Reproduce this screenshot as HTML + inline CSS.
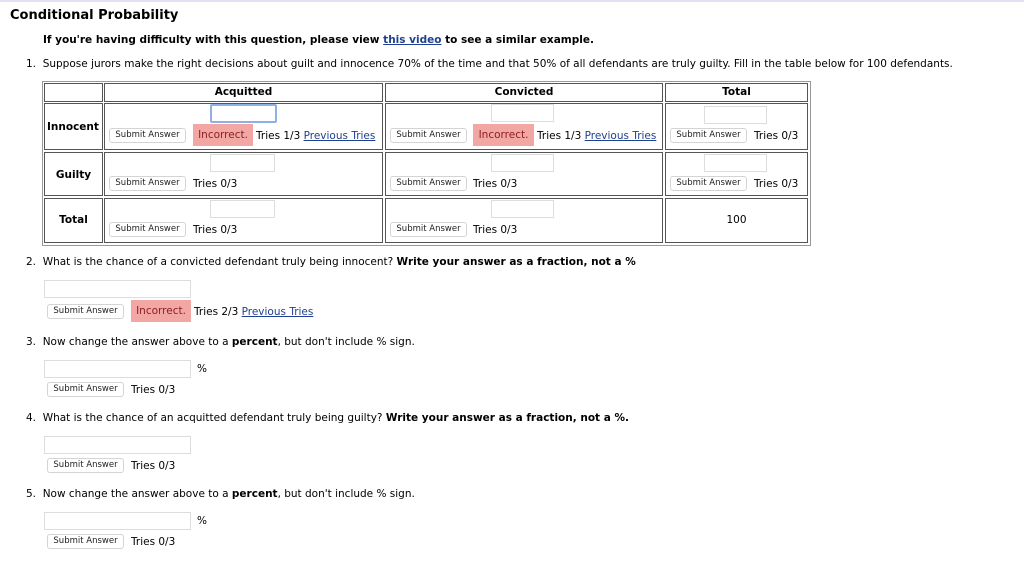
<!DOCTYPE html>
<html><head><meta charset="utf-8"><style>
body{margin:0;width:1024px;height:561px;background:#fff;position:relative;overflow:hidden;font-family:"DejaVu Sans","Liberation Sans",sans-serif;font-size:10.5px;color:#000}
.a{position:absolute;white-space:nowrap;line-height:13px;margin-top:1px}
b{font-weight:bold}
.btn{position:absolute;height:13px;border:1px solid #d4d4d4;border-radius:3px;background:#fff;font-size:8.5px;line-height:13px;text-align:center;width:75px;color:#222}
.inp{position:absolute;border:1px solid #ddd;background:#fff;height:16px}
.inc{position:absolute;background:#f2a7a5;color:#8b1d1d;height:22px;line-height:22px;text-align:center}
a{color:#1f3f8f;text-decoration:underline}
.c{position:absolute;border:1px solid #555}
</style></head><body>
<div style="position:absolute;left:0;top:0;width:1024px;height:2px;background:#e3e0f3"></div>
<div class="a" style="left:10px;top:7px;font-size:13px;font-weight:bold;line-height:16px">Conditional Probability</div>
<div class="a" style="left:43px;top:33px"><b>If you're having difficulty with this question, please view <a>this video</a> to see a similar example.</b></div>
<div class="a" style="left:26px;top:57px">1.&nbsp; Suppose jurors make the right decisions about guilt and innocence 70% of the time and that 50% of all defendants are truly guilty. Fill in the table below for 100 defendants.</div>

<div style="position:absolute;left:42px;top:81px;width:767px;height:163px;border:1px solid #999"></div>
<div class="c" style="left:44px;top:83px;width:57px;height:17px"></div>
<div class="c" style="left:104px;top:83px;width:277px;height:17px"></div>
<div class="c" style="left:385px;top:83px;width:276px;height:17px"></div>
<div class="c" style="left:665px;top:83px;width:141px;height:17px"></div>
<div class="a" style="left:104px;top:85px;width:279px;text-align:center;font-weight:bold">Acquitted</div>
<div class="a" style="left:385px;top:85px;width:278px;text-align:center;font-weight:bold">Convicted</div>
<div class="a" style="left:665px;top:85px;width:143px;text-align:center;font-weight:bold">Total</div>
<div class="c" style="left:44px;top:103px;width:57px;height:45px"></div>
<div class="c" style="left:104px;top:103px;width:277px;height:45px"></div>
<div class="c" style="left:385px;top:103px;width:276px;height:45px"></div>
<div class="c" style="left:665px;top:103px;width:141px;height:45px"></div>
<div class="c" style="left:44px;top:152px;width:57px;height:42px"></div>
<div class="c" style="left:104px;top:152px;width:277px;height:42px"></div>
<div class="c" style="left:385px;top:152px;width:276px;height:42px"></div>
<div class="c" style="left:665px;top:152px;width:141px;height:42px"></div>
<div class="c" style="left:44px;top:198px;width:57px;height:43px"></div>
<div class="c" style="left:104px;top:198px;width:277px;height:43px"></div>
<div class="c" style="left:385px;top:198px;width:276px;height:43px"></div>
<div class="c" style="left:665px;top:198px;width:141px;height:43px"></div>
<div class="a" style="left:47px;top:120px;font-weight:bold">Innocent</div>
<div class="a" style="left:44px;top:168px;width:59px;text-align:center;font-weight:bold">Guilty</div>
<div class="a" style="left:44px;top:213px;width:59px;text-align:center;font-weight:bold">Total</div>

<div class="inp" style="left:210px;top:104px;width:63px;border:2px solid #8fb0e6;height:15px;border-radius:2px"></div>
<div class="btn" style="left:109px;top:128px">Submit Answer</div>
<div class="inc" style="left:193px;top:124px;width:60px">Incorrect.</div>
<div class="a" style="left:256px;top:129px">Tries 1/3 <a>Previous Tries</a></div>
<div class="inp" style="left:491px;top:104px;width:61px"></div>
<div class="btn" style="left:390px;top:128px">Submit Answer</div>
<div class="inc" style="left:473px;top:124px;width:61px">Incorrect.</div>
<div class="a" style="left:537px;top:129px">Tries 1/3 <a>Previous Tries</a></div>
<div class="inp" style="left:704px;top:106px;width:61px"></div>
<div class="btn" style="left:670px;top:128px">Submit Answer</div>
<div class="a" style="left:754px;top:129px">Tries 0/3</div>

<div class="inp" style="left:210px;top:154px;width:63px"></div>
<div class="btn" style="left:109px;top:176px">Submit Answer</div>
<div class="a" style="left:193px;top:177px">Tries 0/3</div>
<div class="inp" style="left:491px;top:154px;width:61px"></div>
<div class="btn" style="left:390px;top:176px">Submit Answer</div>
<div class="a" style="left:473px;top:177px">Tries 0/3</div>
<div class="inp" style="left:704px;top:154px;width:61px"></div>
<div class="btn" style="left:670px;top:176px">Submit Answer</div>
<div class="a" style="left:754px;top:177px">Tries 0/3</div>

<div class="inp" style="left:210px;top:200px;width:63px"></div>
<div class="btn" style="left:109px;top:222px">Submit Answer</div>
<div class="a" style="left:193px;top:223px">Tries 0/3</div>
<div class="inp" style="left:491px;top:200px;width:61px"></div>
<div class="btn" style="left:390px;top:222px">Submit Answer</div>
<div class="a" style="left:473px;top:223px">Tries 0/3</div>
<div class="a" style="left:665px;top:213px;width:143px;text-align:center">100</div>

<div class="a" style="left:26px;top:255px">2.&nbsp; What is the chance of a convicted defendant truly being innocent? <b>Write your answer as a fraction, not a %</b></div>
<div class="inp" style="left:44px;top:280px;width:145px"></div>
<div class="btn" style="left:47px;top:304px">Submit Answer</div>
<div class="inc" style="left:131px;top:300px;width:60px">Incorrect.</div>
<div class="a" style="left:194px;top:305px">Tries 2/3 <a>Previous Tries</a></div>

<div class="a" style="left:26px;top:335px">3.&nbsp; Now change the answer above to a <b>percent</b>, but don't include % sign.</div>
<div class="inp" style="left:44px;top:360px;width:145px"></div>
<div class="a" style="left:197px;top:362px">%</div>
<div class="btn" style="left:47px;top:382px">Submit Answer</div>
<div class="a" style="left:131px;top:383px">Tries 0/3</div>

<div class="a" style="left:26px;top:411px">4.&nbsp; What is the chance of an acquitted defendant truly being guilty? <b>Write your answer as a fraction, not a %.</b></div>
<div class="inp" style="left:44px;top:436px;width:145px"></div>
<div class="btn" style="left:47px;top:458px">Submit Answer</div>
<div class="a" style="left:131px;top:459px">Tries 0/3</div>

<div class="a" style="left:26px;top:487px">5.&nbsp; Now change the answer above to a <b>percent</b>, but don't include % sign.</div>
<div class="inp" style="left:44px;top:512px;width:145px"></div>
<div class="a" style="left:197px;top:514px">%</div>
<div class="btn" style="left:47px;top:534px">Submit Answer</div>
<div class="a" style="left:131px;top:535px">Tries 0/3</div>
</body></html>
